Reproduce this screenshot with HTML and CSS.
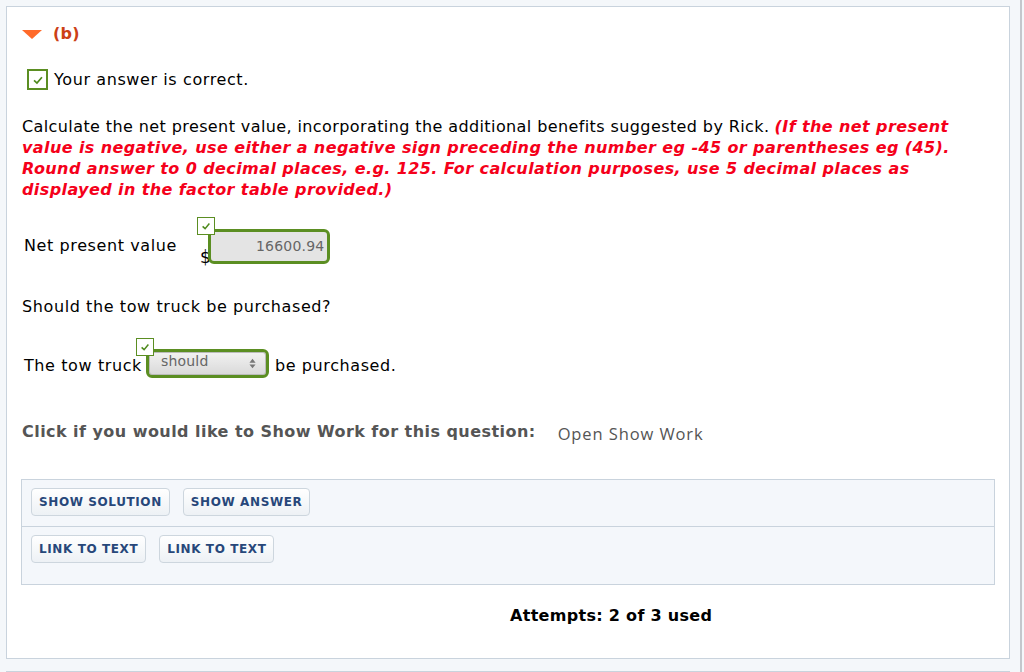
FILE: index.html
```html
<!DOCTYPE html>
<html>
<head>
<meta charset="utf-8">
<link rel="stylesheet" href="styles.css">
</head>
<body>
<div class="page">
  <div class="panel">
    <div class="part-head">
      <span class="tri"></span>
      <span class="part-label">(b)</span>
    </div>
    <div class="correct">
      <span class="cbox big"><svg viewBox="0 0 16 16" width="14" height="14"><path d="M3.5 8.5 L6.8 11.5 L12.5 4.8" fill="none" stroke="#4e8a1c" stroke-width="2"/></svg></span>
      <span>Your answer is correct.</span>
    </div>
    <p class="question"><span class="q-main">Calculate the net present value, incorporating the additional benefits suggested by Rick.</span> <em class="hint">(If the net present value is negative, use either a negative sign preceding the number eg -45 or parentheses eg (45). Round answer to 0 decimal places, e.g. 125. For calculation purposes, use 5 decimal places as displayed in the factor table provided.)</em></p>
    <div class="npv-row">
      <span class="npv-label">Net present value</span>
      <span class="npv-field">
        <span class="dollar">$</span>
        <span class="field-wrap">
          <span class="cbox small"><svg viewBox="0 0 16 16" width="12" height="12"><path d="M3.5 8.5 L6.8 11.5 L12.5 4.8" fill="none" stroke="#4e8a1c" stroke-width="2"/></svg></span>
          <span class="input">16600.94</span>
        </span>
      </span>
    </div>
    <p class="plain">Should the tow truck be purchased?</p>
    <div class="tow-row">
      <span>The tow truck</span>
      <span class="select-wrap">
        <span class="cbox small sel"><svg viewBox="0 0 16 16" width="12" height="12"><path d="M3.5 8.5 L6.8 11.5 L12.5 4.8" fill="none" stroke="#4e8a1c" stroke-width="2"/></svg></span>
        <span class="select"><span class="sel-text">should</span><svg class="arrows" viewBox="0 0 8 12" width="7" height="11"><path d="M4 0.5 L7.5 5 L0.5 5 Z M4 11.5 L7.5 7 L0.5 7 Z" fill="#777"/></svg></span>
      </span>
      <span>be purchased.</span>
    </div>
    <div class="showwork">
      <span class="sw-label">Click if you would like to Show Work for this question:</span>
      <span class="sw-link">Open Show Work</span>
    </div>
    <div class="toolbox">
      <div class="tool-row">
        <span class="btn">SHOW SOLUTION</span>
        <span class="btn">SHOW ANSWER</span>
      </div>
      <div class="tool-row second">
        <span class="btn">LINK TO TEXT</span>
        <span class="btn">LINK TO TEXT</span>
      </div>
    </div>
    <div class="attempts">Attempts: 2 of 3 used</div>
  </div>
  <div class="scroll"></div>
</div>
<div class="next-panel"></div>
</body>
</html>
```
FILE: styles.css
```css
html, body {
  margin: 0;
  padding: 0;
  background: #f4f7fa;
  font-family: "DejaVu Sans", Verdana, sans-serif;
  color: #000;
  overflow: hidden;
}
.page {
  display: flex;
  width: 1024px;
  height: 671px;
  padding-top: 6px;
  box-sizing: border-box;
}
.panel {
  margin-left: 6px;
  width: 1004px;
  height: 653px;
  box-sizing: border-box;
  background: #fff;
  border: 1px solid #c9d3dd;
  padding: 0 0 0 15px;
}
.scroll {
  margin-left: 10px;
  width: 2px;
  background: #c3c7cc;
  height: 672px;
  margin-top: -6px;
}
.next-panel {
  margin-left: 6px;
  width: 1004px;
  height: 10px;
  border-top: 1px solid #c9d3dd;
  background: #f4f7fa;
}
.part-head {
  display: flex;
  align-items: center;
  height: 20px;
  margin-top: 16px;
  gap: 11px;
}
.tri {
  width: 0;
  height: 0;
  border-left: 10px solid transparent;
  border-right: 10px solid transparent;
  border-top: 9px solid #ff6a2a;
  margin-top: 2px;
}
.part-label {
  color: #cc4016;
  font-weight: bold;
  font-size: 16px;
  letter-spacing: 0.3px;
}
.correct {
  display: flex;
  align-items: center;
  gap: 6px;
  margin-top: 26px;
  margin-left: 5px;
  font-size: 16px;
  letter-spacing: 0.6px;
}
.cbox {
  display: inline-flex;
  align-items: center;
  justify-content: center;
  box-sizing: border-box;
  background: #fff;
  border: 2px solid #5b8e22;
}
.cbox.big { width: 21px; height: 21px; }
.cbox.small { width: 18px; height: 18px; border-width: 1px; border-color: #5b8e22; }
.question {
  margin: 26px 0 0 0;
  max-width: 945px;
  font-size: 16px;
  line-height: 21px;
}
.q-main {
  letter-spacing: 0.4px;
}
.hint {
  color: #f5001a;
  font-weight: bold;
  font-style: italic;
  letter-spacing: 0.4px;
}
.npv-row {
  display: flex;
  align-items: flex-start;
  margin-top: 17px;
  margin-left: 2px;
  font-size: 16px;
  letter-spacing: 0.6px;
}
.npv-label {
  margin-top: 19px;
  width: 176px;
}
.npv-field {
  display: flex;
  align-items: flex-end;
}
.dollar {
  font-size: 17px;
  margin-bottom: -3px;
  margin-right: -3px;
}
.field-wrap {
  display: flex;
  flex-direction: column;
  align-items: flex-start;
}
.field-wrap .cbox { margin-left: -11px; margin-bottom: -6px; position: relative; z-index: 1; }
.input {
  width: 122px;
  height: 35px;
  box-sizing: border-box;
  border: 3px solid #5b8e22;
  border-radius: 6px;
  background: #e4e4e4;
  color: #666;
  font-size: 14px;
  letter-spacing: 0.2px;
  text-align: right;
  padding: 6px 3px 0 0;
}
.plain {
  margin: 33px 0 0 0;
  font-size: 16px;
  letter-spacing: 0.6px;
}
.tow-row {
  display: flex;
  align-items: flex-end;
  gap: 6px;
  margin-top: 22px;
  margin-left: 2px;
  font-size: 16px;
  letter-spacing: 0.6px;
}
.select-wrap {
  display: flex;
  flex-direction: column;
  align-items: flex-start;
  margin-left: -2px;
  margin-bottom: -3px;
}
.select-wrap .cbox { margin-left: -10px; margin-bottom: -7px; position: relative; z-index: 1; }
.select {
  display: flex;
  align-items: flex-start;
  justify-content: space-between;
  width: 123px;
  height: 29px;
  box-sizing: border-box;
  border: 3px solid #5b8e22;
  border-radius: 6px;
  background: linear-gradient(#f2f2f2, #d9d9d9);
  box-shadow: inset 0 0 0 1px #bbb;
  padding: 1px 10px 0 12px;
  color: #666;
  font-size: 14px;
  letter-spacing: 0.2px;
}
.arrows { margin-top: 5px; }
.showwork {
  display: flex;
  gap: 22px;
  margin-top: 47px;
  color: #555;
}
.sw-label {
  font-weight: bold;
  font-size: 16px;
  letter-spacing: 0.45px;
}
.sw-link {
  font-size: 16.5px;
  letter-spacing: 0.9px;
  font-family: "Open Sans", "DejaVu Sans", sans-serif;
}
.toolbox {
  margin-top: 34px;
  width: 974px;
  margin-left: -1px;
  box-sizing: border-box;
  border: 1px solid #c9d3dd;
  background: #f4f7fb;
}
.tool-row {
  display: flex;
  gap: 13px;
  padding: 8px 9px 8px 9px;
  height: 46px;
  box-sizing: border-box;
}
.tool-row.second {
  border-top: 1px solid #c9d3dd;
  height: 58px;
}
.btn {
  display: inline-flex;
  align-items: center;
  height: 28px;
  box-sizing: border-box;
  padding: 0 7px;
  border: 1px solid #cdd6de;
  border-radius: 4px;
  background: linear-gradient(#ffffff, #edf1f5);
  color: #27477a;
  font-weight: bold;
  font-size: 12px;
  letter-spacing: 0.6px;
}
.attempts {
  margin-top: 21px;
  margin-left: 488px;
  font-weight: bold;
  font-size: 16px;
  letter-spacing: 0.3px;
}
```
